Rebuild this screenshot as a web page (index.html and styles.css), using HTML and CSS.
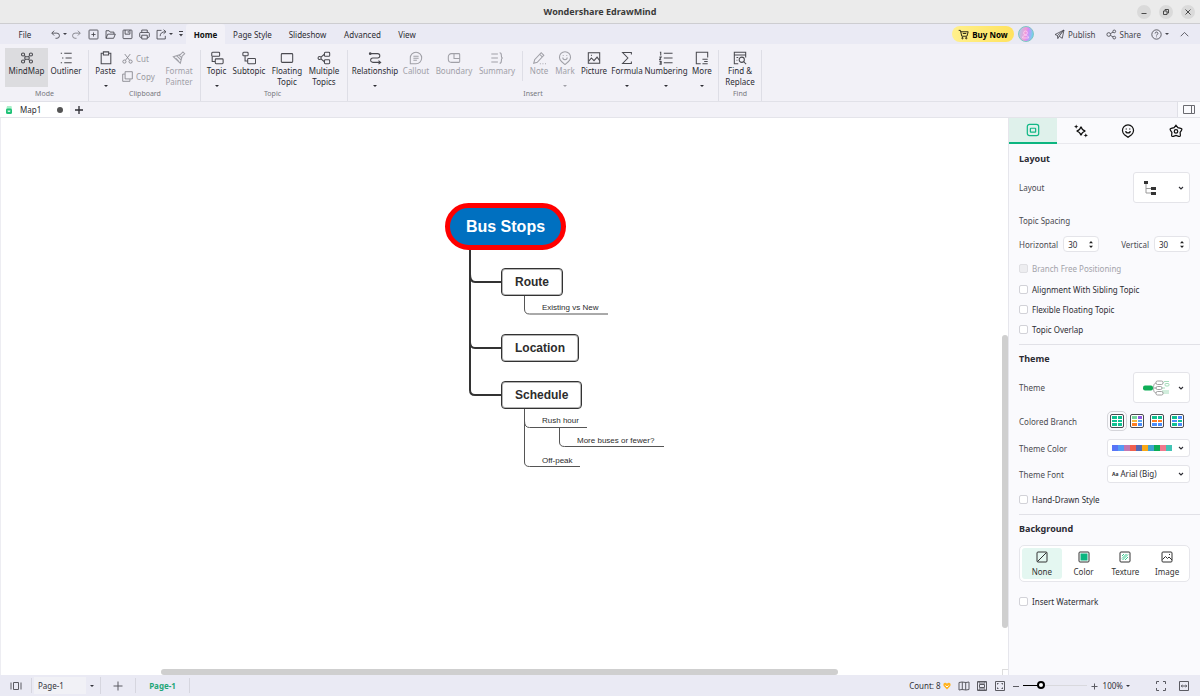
FILE: index.html
```html
<!DOCTYPE html>
<html lang="en">
<head>
<meta charset="utf-8">
<title>Wondershare EdrawMind</title>
<link rel="stylesheet" href="styles.css">
</head>
<body>
<header class="titlebar">
  <h1 class="app-title">Wondershare EdrawMind</h1>
  <div class="window-controls">
    <button class="win-btn" aria-label="Minimize"><svg viewBox="0 0 14 14"><path d="M4.500 8.500h5"/></svg></button>
    <button class="win-btn" aria-label="Restore"><svg viewBox="0 0 14 14"><path d="M4.500 6h3.500v3.500H4.500zM6 6V4.500h3.500V8H8"/></svg></button>
    <button class="win-btn" aria-label="Close"><svg viewBox="0 0 14 14"><path d="M4.500 4.500l5 5M9.500 4.500l-5 5"/></svg></button>
  </div>
</header>

<nav class="menubar">
  <button class="file-btn">File</button>
  <div class="quick">
    <button class="qbtn undo" aria-label="Undo"><svg class="ic" viewBox="0 0 16 16"><path d="M6 2.500L2.500 6 6 9.500M3 6h7a3.700 3.700 0 0 1 0 7.500H8"/></svg><i class="arrow"></i></button>
    <button class="qbtn redo" aria-label="Redo"><svg class="ic" viewBox="0 0 16 16"><path d="M10 2.500L13.500 6 10 9.500M13 6H6a3.700 3.700 0 0 0 0 7.500h2"/></svg></button>
    <button class="qbtn" aria-label="New"><svg class="ic" viewBox="0 0 16 16"><rect x="1.500" y="1.500" width="13" height="13" rx="1"/><path d="M8 5v6M5 8h6"/></svg></button>
    <button class="qbtn" aria-label="Open"><svg class="ic" viewBox="0 0 16 16"><path d="M1.500 13.500v-11h4.500l1.500 2h5.500v3M1.500 13.500l2.500-6h11l-2.500 6z"/></svg></button>
    <button class="qbtn" aria-label="Save"><svg class="ic" viewBox="0 0 16 16"><rect x="1.500" y="1.500" width="13" height="12.500" rx="1"/><path d="M4.500 1.500v6h7v-6M9 3v2.500"/></svg></button>
    <button class="qbtn" aria-label="Print"><svg class="ic" viewBox="0 0 16 16"><path d="M4 5V1.500h8V5M4 12H2.500A1 1 0 0 1 1 11V6.500A1.500 1.500 0 0 1 2.500 5h11A1.500 1.500 0 0 1 15 6.500V11a1 1 0 0 1-1.500 1H12M4 9h8v5.500H4z"/></svg></button>
    <button class="qbtn export" aria-label="Export"><svg class="ic" viewBox="0 0 16 16"><path d="M8 2H1.500v12.500H13.500V10M6 10.500C6 6 9 4 14 4M11 1l3.500 3L11 7"/></svg><i class="arrow"></i></button>
    <button class="qbtn narrow" aria-label="Customize"><svg class="more" viewBox="0 0 6 8"><path d="M1 1.500h4"/><path class="solid" d="M1 4h4L3 6.500z"/></svg></button>
  </div>
  <div class="tabs">
    <button class="menu-tab active">Home</button>
    <button class="menu-tab">Page Style</button>
    <button class="menu-tab">Slideshow</button>
    <button class="menu-tab">Advanced</button>
    <button class="menu-tab t-view">View</button>
  </div>
  <div class="account">
    <button class="buy"><svg class="ic" viewBox="0 0 16 16"><path d="M1 2h2.500l2 8.500h7.500l1.800-6.500H4M7 6.500h5"/><circle cx="6.500" cy="13.300" r="1"/><circle cx="12" cy="13.300" r="1"/></svg>Buy Now</button>
    <button class="avatar" aria-label="Account"><svg viewBox="0 0 16 16"><circle cx="8" cy="6" r="2.300"/><path d="M4.300 12.300c0-4.500 7.400-4.500 7.400 0z"/></svg></button>
    <button class="link-btn publish"><svg class="ic" viewBox="0 0 16 16"><path d="M1.500 8L14.500 1.500 12 13.500 7.500 10.500 5.500 14 5 9.500zM5 9.500L14.500 1.500 7.500 10.500"/></svg>Publish</button>
    <button class="link-btn"><svg class="ic" viewBox="0 0 16 16"><circle cx="4" cy="8" r="2.700"/><circle cx="12" cy="3.500" r="2"/><circle cx="12" cy="12.500" r="2"/><path d="M6.500 6.700L10.200 4.500M6.500 9.300l3.700 2.200"/></svg>Share</button>
    <button class="link-btn help" aria-label="Help"><svg class="ic" viewBox="0 0 16 16"><circle cx="8" cy="8" r="6.800"/><path d="M6 6.500c0-3 4.200-2.500 4 0C10 8 8 8 8 9.500M8 11v1"/></svg><i class="arrow"></i></button>
    <button class="link-btn" aria-label="Collapse ribbon"><svg class="ic" viewBox="0 0 16 16"><path d="M2.500 10.500L8 5l5.500 5.500"/></svg></button>
  </div>
</nav>

<section class="ribbon" aria-label="Home tools">
  <div class="group g-mode">
    <div class="tools">
      <button class="tool selected"><svg viewBox="0 0 16 16"><circle cx="3.500" cy="4" r="1.800"/><circle cx="12.500" cy="4" r="1.800"/><circle cx="3.500" cy="12" r="1.800"/><circle cx="12.500" cy="12" r="1.800"/><rect x="5.500" y="6.500" width="5" height="3" rx="1"/><path d="M5 5.300l1.500 1.200M11 5.300L9.500 6.500M5 10.700l1.500-1.200M11 10.700L9.500 9.500"/></svg><span>MindMap</span></button>
      <button class="tool"><svg viewBox="0 0 16 16"><path d="M2 2.500h1.500M6 2.500h8.500M3.500 8H5M7.500 8h7M2 13.500h1.500M6 13.500h8.500"/></svg><span>Outliner</span></button>
    </div>
    <div class="caption">Mode</div>
  </div>
  <div class="group g-clip">
    <div class="tools">
      <button class="tool"><svg viewBox="0 0 16 16"><path d="M5 2.500H2.500v12h11v-12H11M5 1h6v3.500H5z"/></svg><span>Paste</span><i class="arrow"></i></button>
      <div class="stack">
        <button class="mini"><svg class="ic" viewBox="0 0 16 16"><circle cx="3.500" cy="12.500" r="2.300"/><circle cx="12.500" cy="12.500" r="2.300"/><path d="M5 10.500L12 1.500M11 10.500L4 1.500"/></svg>Cut</button>
        <button class="mini"><svg class="ic" viewBox="0 0 16 16"><path d="M4.500 1h10.500v10.500H4.500zM4 4.500H1V15h10.500v-3"/></svg>Copy</button>
      </div>
      <button class="tool" disabled><svg viewBox="0 0 16 16"><path d="M1.500 6.500l8-2.500 3-3 2 2-3 3-2 8zM5.500 5.500l5 5M4.500 8.500l3 3M8 4.700l3.500 3.500"/></svg><span>Format<br>Painter</span></button>
    </div>
    <div class="caption">Clipboard</div>
  </div>
  <div class="group g-topic">
    <div class="tools">
      <button class="tool"><svg viewBox="0 0 16 16"><rect x="2" y="1.500" width="9" height="4.500" rx="1"/><rect x="6" y="9" width="9" height="5.500" rx="1"/><path d="M2.500 6v6H6"/></svg><span>Topic</span><i class="arrow"></i></button>
      <button class="tool"><svg viewBox="0 0 16 16"><rect x="1" y="1.500" width="6" height="4" rx="1"/><rect x="6.500" y="8.500" width="9" height="6" rx="1"/><path d="M3.500 5.500v6h3"/></svg><span>Subtopic</span></button>
      <button class="tool"><svg viewBox="0 0 16 16"><rect x="1.500" y="3" width="13" height="10" rx="1"/></svg><span>Floating<br>Topic</span></button>
      <button class="tool"><svg viewBox="0 0 16 16"><circle cx="3" cy="8" r="1.800"/><rect x="8.500" y="1.500" width="6" height="4.500" rx="1"/><rect x="8.500" y="10" width="6" height="4.500" rx="1"/><path d="M4.500 7L8.500 3.700M4.500 9l4 3.300"/></svg><span>Multiple<br>Topics</span></button>
    </div>
    <div class="caption">Topic</div>
  </div>
  <div class="group g-insert">
    <div class="tools">
      <button class="tool"><svg viewBox="0 0 16 16"><circle class="solid" cx="2.500" cy="3" r="1.500"/><path d="M2.500 3H11a2.500 2.500 0 0 1 0 5H5.500a2.500 2.500 0 0 0 0 5H14M12 11l2.500 2-2.500 2"/></svg><span>Relationship</span><i class="arrow"></i></button>
      <button class="tool" disabled><svg viewBox="0 0 16 16"><path d="M1.500 14.500V8A6.500 6.500 0 1 1 8 14.500zM5 6h6M5 8.300h6M5 10.600h4"/></svg><span>Callout</span></button>
      <button class="tool" disabled><svg viewBox="0 0 16 16"><path d="M5 3h8.500q1 0 1 1v8q0 1-1 1H5a3.500 3.500 0 0 1-3.500-3.500v-3A3.500 3.500 0 0 1 5 3zM8 3v5.500h6.500"/></svg><span>Boundary</span></button>
      <button class="tool" disabled><svg viewBox="0 0 16 16"><path d="M1.500 3.500H9M1.500 8H9M1.500 12.500H9M11 2c2 0 2 1 2 3s0 3 1.500 3c-1.500 0-1.500 1-1.500 3s0 3-2 3"/></svg><span>Summary</span></button>
      <div class="short-rule"></div>
      <button class="tool" disabled><svg viewBox="0 0 16 16"><path d="M2 14l1-4L10.500 2l3 3L6 13zM9 4l3 3M9 14.500h1M12 14.500h1M15 14.500h1"/></svg><span>Note</span></button>
      <button class="tool" disabled><svg viewBox="0 0 16 16"><path d="M8 15.500L4 12a6.300 6.300 0 1 1 8 0zM5.500 7.500c0 3.300 5 3.300 5 0M6 4.500v1M10 4.500v1"/></svg><span>Mark</span><i class="arrow"></i></button>
      <button class="tool"><svg viewBox="0 0 16 16"><rect x="1.500" y="2" width="13" height="12"/><path d="M2 11.500l3-3.500 3 3 3.500-4 3 4M4.500 5h1"/></svg><span>Picture</span></button>
      <button class="tool"><svg viewBox="0 0 16 16"><path d="M13 4V1.800H3L9 8l-6 6.200h10V12"/></svg><span>Formula</span><i class="arrow"></i></button>
      <button class="tool"><svg viewBox="0 0 16 16"><path d="M5.500 2.500h10M5.500 8h10M5.500 13.500h10M1 1.500h1V5M.5 7h2L.5 10h2M.5 12h2v3h-2M1 13.500h1.500"/></svg><span>Numbering</span><i class="arrow"></i></button>
      <button class="tool"><svg viewBox="0 0 16 16"><path d="M6.500 14.500h-5v-13h13v6M8.500 9.500h6M10.500 12h4M8.500 14.500h6"/></svg><span>More</span><i class="arrow"></i></button>
    </div>
    <div class="caption">Insert</div>
  </div>
  <div class="group g-find">
    <div class="tools">
      <button class="tool"><svg viewBox="0 0 16 16"><path d="M6 14.500H1.500v-13h13v6M1.500 4.500h13M4 7.500h2M4 10.500h1"/><circle cx="10" cy="10" r="3"/><path d="M12 12l3 3"/></svg><span>Find &amp;<br>Replace</span></button>
    </div>
    <div class="caption">Find</div>
  </div>
</section>

<div class="doc-tabs">
  <div class="doc-tab">
    <svg class="doc-icon" viewBox="0 0 8 8"><path class="leaf-back" d="M2 0h4.500L7 3 1 4z"/><rect class="leaf" x="1" y="2.500" width="6" height="5.500" rx="1.500"/><path class="leaf-line" d="M2.500 4.500c0 2 3 2 3 0z"/></svg>
    <span>Map1</span><i class="dirty"></i>
  </div>
  <button class="add-tab" aria-label="New map"><svg viewBox="0 0 10 10"><path d="M5 1v8M1 5h8"/></svg></button>
  <button class="panel-toggle" aria-label="Toggle panel"><svg viewBox="0 0 12 9"><path d="M.5 .5h11v8H.5zM8.500 .5v8"/></svg></button>
</div>

<main class="workspace">
  <section class="canvas" aria-label="Mind map">
    <svg class="links" viewBox="0 0 700 400" width="700" height="400">
      <path class="trunk" d="M469 130V272q0 5 5 5h28M469 156q0 8 5 8h28M469 224q0 6 5 6h28"/>
      <path class="twig" d="M523.500 177v14q0 5 5 5H607M523.500 291v53q0 4.500 5 4.500H579M523.500 303q0 6.500 5 6.500H586M558.500 309v15q0 4.500 5 4.500H663"/>
    </svg>
    <div class="node root">Bus Stops</div>
    <div class="node main-topic n-route">Route</div>
    <div class="node main-topic n-location">Location</div>
    <div class="node main-topic n-schedule">Schedule</div>
    <div class="node sub n-existing">Existing vs New</div>
    <div class="node sub n-rush">Rush hour</div>
    <div class="node sub n-more">More buses or fewer?</div>
    <div class="node sub n-off">Off-peak</div>
    <div class="scroll-v"></div>
    <div class="scroll-h"></div>
    <div class="scroll-corner"></div>
  </section>

  <aside class="panel">
    <div class="panel-tabs">
      <button class="ptab on" aria-label="Style"><svg viewBox="0 0 16 16"><rect x="1.500" y="1.500" width="13" height="13" rx="2.500"/><rect x="5" y="6" width="6" height="4.500" rx=".5"/></svg></button>
      <button class="ptab" aria-label="AI"><svg viewBox="0 0 16 16"><path d="M8 3q1 4 5 5-4 1-5 5-1-4-5-5 4-1 5-5z"/><path class="solid" d="M2.500 .5l.700 1.800L5 3l-1.800.7L2.500 5.500l-.700-1.800L0 3l1.800-.7zM13.500 10.500l.7 1.800 1.800.7-1.800.7-.7 1.800-.7-1.800L11 13l1.800-.7z"/></svg></button>
      <button class="ptab" aria-label="Marks"><svg viewBox="0 0 16 16"><path d="M8 15.200L4 12.200a6.300 6.300 0 1 1 8 0zM5.500 8c0 3 5 3 5 0M6 5v1.300M10 5v1.300"/></svg></button>
      <button class="ptab" aria-label="Clipart"><svg viewBox="0 0 16 16"><path d="M8 1.500l2.200 2.700 3.300.8q2 .5.800 2.200L12.700 9.500l.3 3.300q0 2-2 1.300L8 13l-3 1.100q-2 .700-2-1.300l.3-3.300L1.700 7.200Q.5 5.500 2.500 5l3.300-.8z"/><circle cx="8" cy="8.500" r="2"/></svg></button>
    </div>

    <section class="block">
      <h2>Layout</h2>
      <div class="row tall"><span>Layout</span>
        <button class="picker big" aria-label="Layout style"><svg class="layout-pic" viewBox="0 0 14 16"><path d="M3 3v10h6M3 8.500h6"/><path class="solid" d="M1 1h4v3H1zM8 7h5v3H8zM8 12h5v3H8z"/></svg><svg class="chev" viewBox="0 0 6 6"><path d="M1 2l2 2 2-2"/></svg></button>
      </div>
      <div class="row spacing-title">Topic Spacing</div>
      <div class="row spins">
        <label for="sp-h">Horizontal</label>
        <span class="spin"><input id="sp-h" type="text" value="30"><svg viewBox="0 0 5 9"><path d="M0 3L2.500 0 5 3zM0 6h5L2.500 9z"/></svg></span>
        <label class="second" for="sp-v">Vertical</label>
        <span class="spin"><input id="sp-v" type="text" value="30"><svg viewBox="0 0 5 9"><path d="M0 3L2.500 0 5 3zM0 6h5L2.500 9z"/></svg></span>
      </div>
      <label class="check off"><input type="checkbox" disabled>Branch Free Positioning</label>
      <label class="check"><input type="checkbox">Alignment With Sibling Topic</label>
      <label class="check"><input type="checkbox">Flexible Floating Topic</label>
      <label class="check"><input type="checkbox">Topic Overlap</label>
    </section>

    <section class="block ruled">
      <h2>Theme</h2>
      <div class="row tall"><span>Theme</span>
        <button class="picker big" aria-label="Theme style"><svg class="theme-pic" viewBox="0 0 28 16"><path class="g" d="M9 8C12 8 9 3 14 3M9 8h5M9 8c3 0 0 5 5 5"/><path class="gr" d="M19 3c2 0 1-1.500 3-1.500h4M19 13h7M19 11h7M19 8h3"/><rect class="pill" x="0" y="5.500" width="10" height="5" rx="2"/><rect class="g w" x="13" y="1" width="7" height="3.500" rx="1.500"/><rect class="g w" x="13" y="6.500" width="6" height="3" rx="1.500"/><rect class="g w" x="13" y="11.500" width="7" height="3.500" rx="1.500"/><rect class="gr w" x="22" y="3.500" width="4" height="2.500" rx="1"/></svg><svg class="chev" viewBox="0 0 6 6"><path d="M1 2l2 2 2-2"/></svg></button>
      </div>
      <div class="row branch"><span>Colored Branch</span>
        <div class="swatches">
          <button class="swatch on" aria-label="Single color"><i class="c1"></i><i class="c1"></i><i class="c1"></i><i class="c1"></i><i class="c1"></i><i class="c1"></i></button>
          <button class="swatch" aria-label="Rainbow"><i class="c2"></i><i class="c3"></i><i class="c4"></i><i class="c5"></i><i class="c6"></i><i class="c7"></i></button>
          <button class="swatch" aria-label="Three colors"><i class="c1"></i><i class="c1"></i><i class="c6"></i><i class="c6"></i><i class="c7"></i><i class="c7"></i></button>
          <button class="swatch" aria-label="Alternating"><i class="c1"></i><i class="c7"></i><i class="c7"></i><i class="c1"></i><i class="c1"></i><i class="c7"></i></button>
        </div>
      </div>
      <div class="row pick"><span>Theme Color</span>
        <button class="picker" aria-label="Theme color"><span class="strip"><i class="s1"></i><i class="s2"></i><i class="s3"></i><i class="s4"></i><i class="s5"></i><i class="s6"></i><i class="s7"></i><i class="s8"></i><i class="s9"></i><i class="s10"></i></span><svg class="chev" viewBox="0 0 6 6"><path d="M1 2l2 2 2-2"/></svg></button>
      </div>
      <div class="row pick"><label for="font">Theme Font</label>
        <span class="picker"><small>Aa</small><select id="font"><option>Arial (Big)</option></select><svg class="chev" viewBox="0 0 6 6"><path d="M1 2l2 2 2-2"/></svg></span>
      </div>
      <label class="check hand"><input type="checkbox">Hand-Drawn Style</label>
    </section>

    <section class="block ruled">
      <h2>Background</h2>
      <div class="bg-box">
        <button class="bg on"><svg viewBox="0 0 12 12"><rect x="1" y="1" width="10" height="10" rx="1"/><path d="M1.500 10.500l9-9"/></svg>None</button>
        <button class="bg"><svg viewBox="0 0 12 12"><rect x="1" y="1" width="10" height="10" rx="1"/><path class="fill" d="M2.500 2.500h7v7h-7z"/></svg>Color</button>
        <button class="bg"><svg viewBox="0 0 12 12"><rect x="1" y="1" width="10" height="10" rx="1"/><path class="hatch" d="M3 5l2-2M3 7.500L7.500 3M3.500 9L9 3.500M6 9l3-3"/></svg>Texture</button>
        <button class="bg"><svg viewBox="0 0 12 12"><rect x="1" y="1" width="10" height="10" rx="1"/><path d="M1.500 8.500l3-3 2 2L8 6l3 3M8 3.500h1"/></svg>Image</button>
      </div>
      <label class="check water"><input type="checkbox">Insert Watermark</label>
    </section>
  </aside>
</main>

<footer class="status">
  <button class="sbtn s-pages" aria-label="Page list"><svg viewBox="0 0 12 12"><path d="M3.500 2.500h5v7h-5zM1 2.500v7M11 2.500v7"/></svg></button>
  <div class="page-select"><select aria-label="Page"><option>Page-1</option></select><i class="arrow"></i></div>
  <button class="sbtn s-add" aria-label="Add page"><svg viewBox="0 0 12 12"><path d="M6 1.500v9M1.500 6h9"/></svg></button>
  <button class="page-tab">Page-1</button>
  <div class="status-right">
    <span class="count">Count: 8</span>
    <svg class="heart" viewBox="0 0 8 8"><path d="M4 7.500L.7 4Q-.3 1 2 .7 3.300.6 4 1.700 4.700.6 6 .7q2.300.3 1.300 3.300z"/><path class="tick" d="M2.500 3.500L4 5l1.500-1.500"/></svg>
    <button class="sbtn s-map" aria-label="Map view"><svg viewBox="0 0 12 12"><path d="M1 2.500l3-.5 4 .5 3-.5v7.500l-3 .5-4-.5-3 .5zM4.300 2v7.500M7.700 2.500V10"/></svg></button>
    <button class="sbtn" aria-label="Page view"><svg viewBox="0 0 12 12"><path d="M1.500 1.500h9v9h-9zM3.500 4.500h5v3h-5zM3 1.500V3h6V1.500M3 10.500V9h6v1.500"/></svg></button>
    <button class="sbtn" aria-label="Fit page"><svg viewBox="0 0 12 12"><path d="M1.500 1.500h9v9h-9z"/><path class="solid" d="M3 3h2L3 5zM9 3v2L7 3zM3 9V7l2 2zM9 9H7l2-2z"/></svg></button>
    <button class="sbtn s-small" aria-label="Zoom out"><svg viewBox="0 0 12 12"><path d="M3 6.500h6"/></svg></button>
    <input class="zoom" type="range" min="0" max="100" value="25" aria-label="Zoom">
    <button class="sbtn s-small" aria-label="Zoom in"><svg viewBox="0 0 12 12"><path d="M6.500 3.500v6M3.500 6.500h6"/></svg></button>
    <button class="percent">100%<i class="arrow"></i></button>
    <button class="sbtn s-full" aria-label="Full screen"><svg viewBox="0 0 12 12"><path d="M4 1.500H1.500V4M8 1.500h2.500V4M4 10.500H1.500V8M8 10.500h2.500V8"/></svg></button>
    <button class="sbtn" aria-label="Fit width"><svg viewBox="0 0 12 12"><path d="M1.500 1.500h9v9h-9zM3 6h6M4.500 5L3.200 6l1.300 1M7.500 5l1.300 1-1.300 1"/></svg></button>
  </div>
</footer>
</body>
</html>
```
FILE: styles.css
```css
*, *::before, *::after { box-sizing: border-box; }
body {
  margin: 0;
  height: 100vh;
  display: flex;
  flex-direction: column;
  overflow: hidden;
  font: 8px/11px "Noto Sans", sans-serif;
  color: #2c2c33;
  background: #fff;
}
button, input, select { font: inherit; color: inherit; margin: 0; padding: 0; border: 0; background: none; }
button { display: flex; align-items: center; justify-content: center; white-space: nowrap; }
svg { display: block; flex: none; fill: none; stroke: currentColor; }
h1, h2 { margin: 0; }
.solid { fill: currentColor; stroke: none; }
.ic { width: 11px; height: 11px; stroke-width: 1.2; }
.arrow { flex: none; border: 2px solid transparent; border-top-color: currentColor; border-bottom: 0; }

/* title bar */
.titlebar { display: grid; grid-template-columns: 1fr auto 1fr; align-items: center; height: 24px; background: #ebebeb; border-bottom: 1px solid #cdcdd0; }
.app-title { grid-column: 2; font-size: 9px; line-height: 12px; color: #3a3a3a; }
.window-controls { display: flex; justify-content: flex-end; gap: 8px; padding-right: 5px; }
.win-btn { width: 14px; height: 14px; border-radius: 50%; background: #dadada; color: #4a4a4a; }
.win-btn svg { width: 14px; height: 14px; }

/* menu bar */
.menubar { display: flex; align-items: stretch; height: 20px; background: #eaeaf4; }
.file-btn { width: 50px; }
.quick { display: flex; color: #3f3f46; }
.qbtn { width: 17px; }
.qbtn.undo { width: 16px; gap: 2px; }
.qbtn.redo { width: 19px; padding-left: 2px; color: #77777d; }
.qbtn.export { width: 22px; gap: 2px; }
.qbtn.narrow { width: 11px; }
.more { width: 6px; height: 8px; }
.tabs { display: flex; }
.menu-tab { width: 55px; }
.menu-tab.active { width: 39px; font-weight: bold; background: #f2f1f7; border-radius: 3px 3px 0 0; color: #111; }
.menu-tab.t-view { width: 34px; }
.account { display: flex; align-items: center; margin-left: auto; padding-right: 10px; }
.buy { width: 62px; height: 16px; gap: 3px; border-radius: 8px; background: linear-gradient(90deg, #fff08c, #ffe25e); font-weight: bold; color: #000; }
.avatar { width: 16px; height: 16px; margin: 0 20px 0 4px; border-radius: 50%; border: 1px solid #7dc6c4; background: linear-gradient(100deg, #a8cdea, #f29ad6 45%, #d58cf8 60%, #6fd4ee 92%); color: #fbd3f4; }
.avatar svg { width: 13px; height: 13px; }
.link-btn { gap: 3px; color: #45454c; }
.link-btn + .link-btn { margin-left: 10px; }

/* ribbon */
.ribbon { display: flex; height: 58px; background: #f2f1f7; border-bottom: 1px solid #e1e1e8; }
.group { display: flex; flex-direction: column; padding: 4px 2px 0; border-right: 1px solid #e0e0e7; border-image: linear-gradient(transparent 12%, #dedee6 12%) 1; }
.tools { display: flex; height: 40px; }
.caption { text-align: center; font-size: 7px; color: #77777e; }
.g-mode { padding-left: 5px; padding-right: 4px; }
.g-clip { padding-left: 3px; }
.g-topic { padding-right: 5px; }
.tool { flex-direction: column; justify-content: flex-start; position: relative; padding-top: 3px; line-height: 11px; }
.tool svg { width: 14px; height: 14px; stroke-width: 1.2; color: #4a4a50; }
.tool .arrow { position: absolute; bottom: 1px; }
.tool:disabled, .tool:disabled svg { color: #a0a0a7; }
.tool.selected { background: #dcdcdf; height: 39px; }
.g-mode .tools { display: grid; grid-template-columns: 43px 36px; }
.g-clip .tools { display: grid; grid-template-columns: 27px 41px 38px; }
.g-topic .tools { display: grid; grid-template-columns: 27px 38px 38px 36px; }
.g-insert .tools { display: grid; grid-template-columns: 50px 32px 44px 42px 8px 26px 26px 32px 34px 44px 28px; }
.g-find .tools { display: grid; grid-template-columns: 38px; }
.short-rule { justify-self: center; width: 1px; height: 30px; margin-top: 3px; background: #dedee6; }
.stack { display: flex; flex-direction: column; gap: 6px; padding: 4px 0 0 3px; color: #9a9aa1; }
.mini { justify-content: flex-start; gap: 3px; height: 12px; }
.mini svg { color: #808087; }

/* document tabs */
.doc-tabs { display: flex; height: 16px; background: #f2f1f7; border-bottom: 1px solid #e4e4ea; }
.doc-tab { display: flex; align-items: center; width: 70px; padding: 0 7px 0 5px; gap: 7px; background: #fff; }
.doc-icon { width: 8px; height: 8px; stroke: none; }
.leaf { fill: #1fc177; }
.leaf-back { fill: #a8f0c9; }
.leaf-line { fill: #d6fbe6; }
.dirty { width: 6px; height: 6px; margin-left: auto; border-radius: 50%; background: #555; }
.add-tab { width: 17px; }
.add-tab svg { width: 10px; height: 10px; stroke-width: 1.3; }
.panel-toggle { width: 23px; margin-left: auto; background: #fafafd; border-left: 1px solid #e0e0e7; color: #6a6a70; }
.panel-toggle svg { width: 12px; height: 9px; }

/* canvas */
.workspace { flex: 1; display: flex; min-height: 0; }
.canvas { position: relative; flex: 1; overflow: hidden; border-left: 1px solid #ededf2; background: #fff; font-family: "Liberation Sans", Arial, sans-serif; color: #2d2d2d; }
.links { position: absolute; left: 0; top: 0; }
.trunk { stroke: #333; stroke-width: 2; }
.twig { stroke: #555; stroke-width: 1; }
.node { position: absolute; display: flex; align-items: center; justify-content: center; white-space: nowrap; }
.root { left: 444px; top: 85px; width: 121px; height: 47px; border: 5px solid #f00; border-radius: 24px; background: #0070c0; color: #fff; font-weight: bold; font-size: 16px; line-height: 20px; }
.main-topic { left: 500px; height: 28px; padding: 0 13px; border: 1px solid #333; box-shadow: inset 0 0 0 1px #b5b5b5; border-radius: 4px; background: #fff; font-weight: bold; font-size: 12px; line-height: 16px; }
.n-route { top: 150px; }
.n-location { top: 216px; }
.n-schedule { top: 263px; }
.sub { left: 541px; }
.n-existing { top: 184px; }
.n-rush { top: 297px; }
.n-more { left: 576px; top: 317px; }
.n-off { top: 337px; }
.scroll-v { position: absolute; right: 0; top: 217px; width: 6px; height: 293px; border-radius: 3px; background: #cfcfcf; }
.scroll-h { position: absolute; left: 160px; bottom: 0; width: 677px; height: 6px; border-radius: 3px; background: #cfcfcf; }
.scroll-corner { position: absolute; right: 0; bottom: 0; width: 6px; height: 6px; border: 1px solid #ddd; border-width: 1px 0 0 1px; }

/* side panel */
.panel { flex: none; width: 192px; border-left: 1px solid #e6e6ec; background: #fafafd; overflow: hidden; }
.panel-tabs { display: grid; grid-template-columns: repeat(4, 1fr); height: 26px; border-bottom: 1px solid #e9e9ee; }
.ptab { height: 26px; color: #111; }
.ptab.on { background: #dff1eb; border-bottom: 2px solid #0cb580; color: #12b886; }
.ptab svg { width: 14px; height: 14px; stroke-width: 1.4; }
.block { padding: 8px 10px 0; }
.block.ruled { margin-top: 7px; padding-top: 0; }
.block.ruled::before { content: ""; display: block; height: 1px; margin: 0 -10px 7px 0; background: #e1e1e7; }
.block h2 { font-size: 9px; line-height: 13px; }
.row { display: flex; align-items: center; justify-content: space-between; color: #4a4a51; }
.row.tall { height: 31px; margin-top: 7px; }
.picker { display: flex; align-items: center; justify-content: space-between; width: 83px; height: 18px; padding: 0 5px 0 4px; border: 1px solid #e4e4e9; border-radius: 3px; background: #fff; color: #2c2c33; }
.picker.big { width: 57px; height: 31px; padding-left: 9px; }
.chev { width: 6px; height: 6px; stroke-width: 1.1; }
.layout-pic { width: 14px; height: 16px; stroke: #999; color: #333; }
.theme-pic { width: 28px; height: 16px; stroke-width: .8; }
.g { stroke: #8a8a8a; }
.gr { stroke: #8ed3a8; }
.w { fill: #fff; }
.pill { fill: #0fae57; stroke: none; }
.row.spacing-title { height: 16px; margin-top: 9px; }
.row.spins { height: 16px; margin-top: 8px; justify-content: flex-start; gap: 5px; }
.second { margin-left: auto; }
.spin { display: flex; align-items: center; width: 36px; height: 16px; padding: 0 5px 0 4px; border: 1px solid #e4e4e9; border-radius: 4px; background: #fff; }
.spin input { flex: 1; min-width: 0; width: 18px; color: #2c2c33; }
.spin svg { width: 4px; height: 9px; fill: #222; stroke: none; }
.check { display: flex; align-items: center; gap: 4px; height: 16px; margin-top: 4px; }
.spins + .check { margin-top: 8px; margin-bottom: 5px; }
.check input { appearance: none; width: 9px; height: 9px; border: 1px solid #d2d2d8; border-radius: 2px; background: #fff; }
.check.off { color: #a3a3aa; }
.check.off input { background: #ededf0; border-color: #dfdfe3; }
.row.branch { height: 20px; margin-top: 8px; }
.swatches { display: flex; padding-right: 3px; }
.swatch { display: grid; grid-template-columns: 1fr 1fr; grid-template-rows: repeat(3, 1fr); gap: 1px; width: 14px; height: 14px; margin: 3px; padding: 1px; border: 1px solid #4a4a50; border-radius: 2px; background: #fff; }
.swatch i { width: 100%; height: 100%; }
.swatch.on { outline: 1px solid #d5d5da; outline-offset: 2px; }
.c1 { background: #10c091; }
.c2 { background: #75d39b; }
.c3 { background: #8a5ce0; }
.c4 { background: #f5b83d; }
.c5 { background: #5aa6ee; }
.c6 { background: #ff7e22; }
.c7 { background: #4a8dfa; }
.row.pick { height: 18px; margin-top: 8px; }
.strip { display: flex; width: 60px; height: 6px; }
.strip i { flex: 1; }
.s1 { background: #5875f7; }
.s2 { background: #559cf5; }
.s3 { background: #c477b0; }
.s4 { background: #f0604e; }
.s5 { background: #5469b3; }
.s6 { background: #f9a816; }
.s7 { background: #3fa2cf; }
.s8 { background: #0cad55; }
.s9 { background: #f2798d; }
.s10 { background: #43c4b5; }
.picker small { font-size: 5px; font-weight: bold; }
.picker select { flex: 1; appearance: none; margin-left: 2px; line-height: 12px; }
.check.hand { margin-top: 8px; }
.bg-box { display: grid; grid-template-columns: repeat(4, 1fr); gap: 2px; margin-top: 10px; padding: 2px; height: 37px; border: 1px solid #e6e6eb; border-radius: 5px; background: #fff; }
.bg { flex-direction: column; gap: 3px; border-radius: 3px; color: #333; }
.bg.on { background: #e4f7f1; }
.bg svg { width: 12px; height: 12px; }
.fill { fill: #0cb580; stroke: none; }
.hatch { stroke: #38c98f; }
.check.water { margin-top: 11px; }

/* status bar */
.status { display: flex; align-items: center; height: 21px; background: #eaeaf4; color: #33333a; }
.sbtn { width: 18px; height: 18px; color: #5b5b62; }
.sbtn svg { width: 12px; height: 12px; }
.s-pages { width: 32px; height: 15px; border-right: 1px solid #d6d6df; }
.page-select { display: flex; align-items: center; height: 17px; width: 67px; margin-left: 2px; padding: 0 6px 0 4px; border-right: 1px solid #d6d6df; background: linear-gradient(90deg, #f1f1f6 52px, transparent 52px); }
.page-select select { flex: 1; appearance: none; height: 17px; }
.s-add { width: 35px; height: 15px; border-right: 1px solid #d6d6df; }
.page-tab { width: 54px; height: 15px; border-right: 1px solid #d6d6df; font-weight: bold; color: #1fa678; }
.status-right { display: flex; align-items: center; margin-left: auto; padding-right: 7px; }
.heart { width: 8px; height: 8px; margin: 0 4px 0 2px; fill: #ffb31f; stroke: none; }
.tick { fill: none; stroke: #fff; }
.s-small { width: 14px; }
.zoom { appearance: none; width: 64px; height: 9px; }
.zoom::-webkit-slider-runnable-track { height: 1px; background: linear-gradient(90deg, #000 25%, #d9d9de 25%); }
.zoom::-webkit-slider-thumb { appearance: none; width: 8px; height: 8px; margin-top: -4px; border: 2px solid #000; border-radius: 50%; background: #fff; }
.percent { gap: 3px; margin-left: 2px; }
.s-full { margin: 0 5px 0 22px; }
```
